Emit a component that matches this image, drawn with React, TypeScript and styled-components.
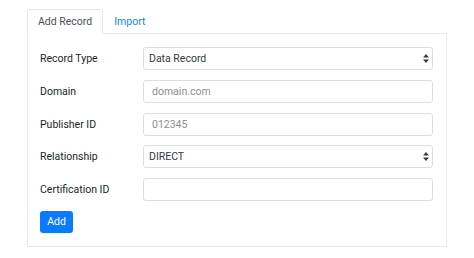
import styled, { createGlobalStyle } from 'styled-components';

const GlobalStyle = createGlobalStyle`
  body {
    margin: 0;
    background: #fff;
    font-family: Roboto, "Liberation Sans", Arial, sans-serif;
    color: #212529;
  }
`;

interface TabProps {
  active?: boolean;
}

const Page = styled.div`
  padding: 9px 0 0 27px;
  width: 420px;
`;

const TabBar = styled.div`
  display: flex;
  margin-bottom: -1px;
  position: relative;
  z-index: 1;
`;

const Tab = styled.div<TabProps>`
  height: 25px;
  box-sizing: border-box;
  padding: 0 10px;
  display: flex;
  align-items: center;
  font-size: 10.5px;
  color: ${(p) => (p.active ? '#495057' : '#1a7ff5')};
  background: ${(p) => (p.active ? '#fff' : 'transparent')};
  border: 1px solid ${(p) => (p.active ? '#e3e5e8' : 'transparent')};
  border-bottom-color: ${(p) => (p.active ? '#fff' : 'transparent')};
  border-radius: 3px 3px 0 0;
`;

const Card = styled.form`
  border: 1px solid #e9eaec;
  padding: 13px 13px 13px 12px;
  display: flex;
  flex-direction: column;
  gap: 9.75px;
`;

const Row = styled.div`
  display: grid;
  grid-template-columns: 103px 1fr;
  align-items: center;
`;

const Label = styled.label`
  font-size: 10.5px;
  color: #212529;
`;

const Input = styled.input`
  height: 23px;
  box-sizing: border-box;
  border: 1px solid #dcdfe2;
  border-radius: 3px;
  padding: 0 8px;
  font-family: inherit;
  font-size: 10.5px;
  color: #495057;
  &::placeholder {
    color: #8a8f95;
  }
`;

const SelectWrap = styled.div`
  position: relative;
`;

const Select = styled.select`
  width: 100%;
  height: 23px;
  box-sizing: border-box;
  border: 1px solid #dcdfe2;
  border-radius: 3px;
  padding: 0 16px 0 5px;
  appearance: none;
  background: #fff;
  font-family: inherit;
  font-size: 10.5px;
  color: #343a40;
`;

const Arrows = styled.svg`
  position: absolute;
  right: 4px;
  top: 7px;
  pointer-events: none;
`;

const Button = styled.button`
  align-self: flex-start;
  height: 22px;
  width: 33px;
  border: none;
  border-radius: 3px;
  background: #0a7bff;
  color: #fff;
  font-family: inherit;
  font-size: 10.5px;
  padding: 0;
`;

const SelectField = ({ value }: { value: string }) => (
  <SelectWrap>
    <Select defaultValue={value}>
      <option>{value}</option>
    </Select>
    <Arrows width="6" height="9" viewBox="0 0 6 9">
      <path d="M3 0 L6 3.5 H0 Z M3 9 L0 5.5 H6 Z" fill="#343a40" />
    </Arrows>
  </SelectWrap>
);

export default function App() {
  return (
    <>
      <GlobalStyle />
      <Page>
        <TabBar>
          <Tab active>Add Record</Tab>
          <Tab>Import</Tab>
        </TabBar>
        <Card onSubmit={(e) => e.preventDefault()}>
          <Row>
            <Label>Record Type</Label>
            <SelectField value="Data Record" />
          </Row>
          <Row>
            <Label>Domain</Label>
            <Input placeholder="domain.com" />
          </Row>
          <Row>
            <Label>Publisher ID</Label>
            <Input placeholder="012345" />
          </Row>
          <Row>
            <Label>Relationship</Label>
            <SelectField value="DIRECT" />
          </Row>
          <Row>
            <Label>Certification ID</Label>
            <Input />
          </Row>
          <Button type="submit">Add</Button>
        </Card>
      </Page>
    </>
  );
}
